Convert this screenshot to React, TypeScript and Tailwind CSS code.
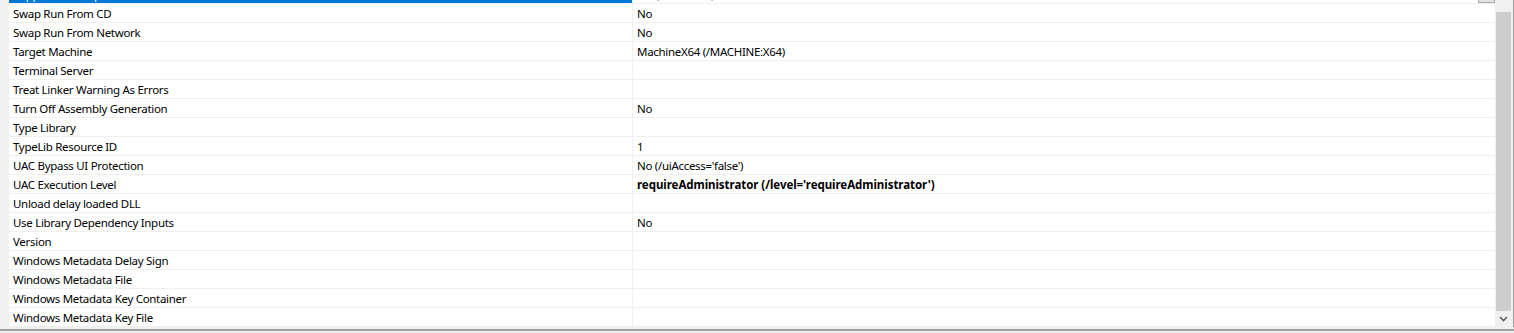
import React from "react";

const rows: { label: string; value: string; bold?: boolean }[] = [
  { label: "Swap Run From CD", value: "No" },
  { label: "Swap Run From Network", value: "No" },
  { label: "Target Machine", value: "MachineX64 (/MACHINE:X64)" },
  { label: "Terminal Server", value: "" },
  { label: "Treat Linker Warning As Errors", value: "" },
  { label: "Turn Off Assembly Generation", value: "No" },
  { label: "Type Library", value: "" },
  { label: "TypeLib Resource ID", value: "1" },
  { label: "UAC Bypass UI Protection", value: "No (/uiAccess='false')" },
  { label: "UAC Execution Level", value: "requireAdministrator (/level='requireAdministrator')", bold: true },
  { label: "Unload delay loaded DLL", value: "" },
  { label: "Use Library Dependency Inputs", value: "No" },
  { label: "Version", value: "" },
  { label: "Windows Metadata Delay Sign", value: "" },
  { label: "Windows Metadata File", value: "" },
  { label: "Windows Metadata Key Container", value: "" },
  { label: "Windows Metadata Key File", value: "" },
];

export default function App() {
  return (
    <div
      className="w-[1514px] h-[333px] bg-[#f0f0f0] flex flex-col overflow-hidden text-[11.5px] tracking-[-0.3px] text-black"
      style={{ fontFamily: "'Noto Sans', 'Segoe UI', sans-serif" }}
    >
      <div className="flex h-[327px]">
        <div className="w-[9px] bg-[#f0f0f0]" />
        <div className="flex-1 flex flex-col bg-white">
          {/* partially visible selected row */}
          <div className="h-[4px] overflow-hidden flex flex-col justify-end">
            <div className="flex h-[19px] shrink-0 border-b border-[#f0f0f0]">
              <div className="w-[624px] bg-[#0078d7] text-white pl-[4px] leading-[19px] border-r border-[#f0f0f0]">
                Suppress Startup Banner
              </div>
              <div className="flex-1 flex pl-[3px] leading-[19px]">
                <span className="flex-1">Yes (/NOLOGO)</span>
                <div className="w-[17px] h-[18px] bg-[#e1e1e1] border border-[#adadad]" />
              </div>
            </div>
          </div>
          {rows.map((r) => (
            <div key={r.label} className="flex h-[19px] border-b border-[#f0f0f0]">
              <div className="w-[624px] pl-[4px] leading-[19px] border-r border-[#f0f0f0] whitespace-nowrap">
                {r.label}
              </div>
              <div
                className={`flex-1 pl-[4px] leading-[19px] whitespace-nowrap ${
                  r.bold ? "font-bold tracking-[-0.05px]" : ""
                }`}
              >
                {r.value}
              </div>
            </div>
          ))}
        </div>
        <div className="w-[17px] bg-[#f0f0f0] flex flex-col">
          <div className="h-[12px]" />
          <div className="mx-[1px] flex-1 bg-[#cdcdcd]" />
          <div className="h-[16px] flex items-center justify-center">
            <svg width="9" height="6" viewBox="0 0 9 6">
              <path d="M1 1 L4.5 4.5 L8 1" stroke="#606060" strokeWidth="1.6" fill="none" />
            </svg>
          </div>
        </div>
        <div className="w-[2px] bg-[#a0a0a0] border-l border-[#f0f0f0]" />
      </div>
      <div className="h-[6px] flex flex-col">
        <div className="h-[2px] bg-[#f0f0f0]" />
        <div className="h-[2px] bg-[#a0a0a0]" />
        <div className="flex-1 bg-[#f0f0f0]" />
      </div>
    </div>
  );
}
